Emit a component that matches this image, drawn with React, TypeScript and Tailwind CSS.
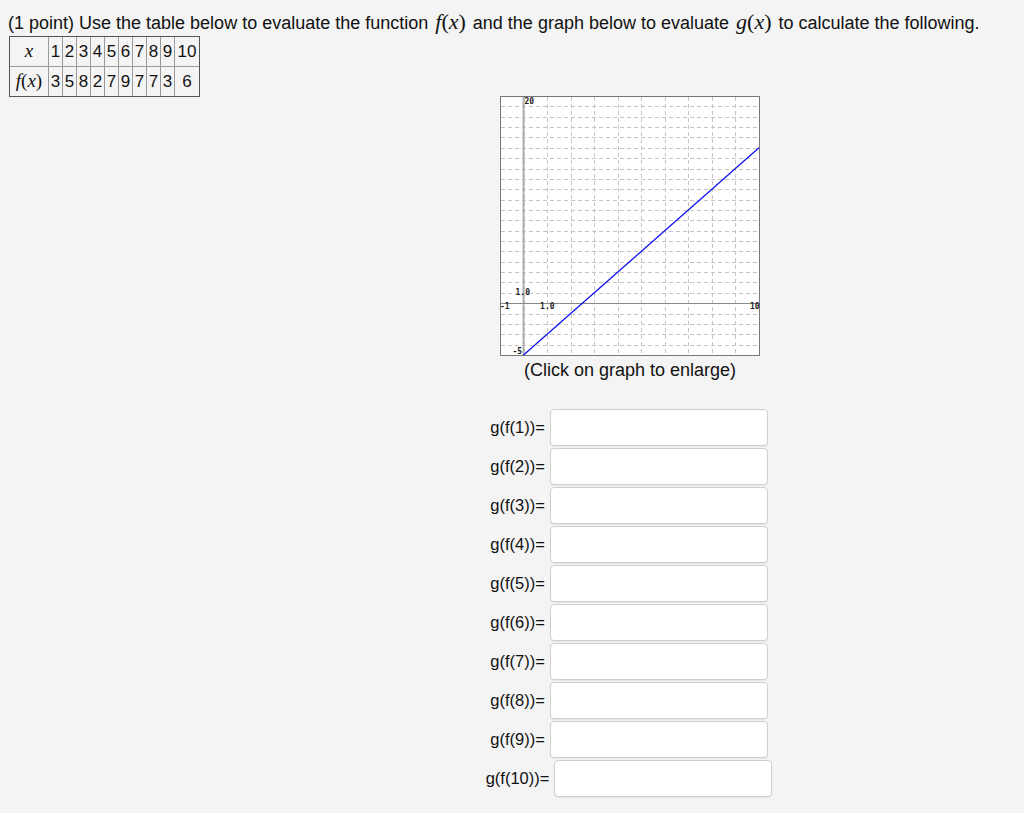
const XS = [1, 2, 3, 4, 5, 6, 7, 8, 9, 10];
const FX = [3, 5, 8, 2, 7, 9, 7, 7, 3, 6];

const W = 259;
const H = 259;
const px = (x: number) => ((x + 1) * W) / 11;
const py = (y: number) => ((20 - y) * H) / 25;

function MathFx({ name, big }: { name: string; big?: boolean }) {
  return (
    <span className={`font-['Liberation_Serif',serif] ${big ? "mx-[2px] text-[22px] leading-[20px]" : "text-[19px]"}`}>
      <i>{name}</i>(<i>x</i>)
    </span>
  );
}

function Graph() {
  const vx = Array.from({ length: 10 }, (_, i) => i);
  const hy = Array.from({ length: 24 }, (_, i) => i - 4);
  return (
    <svg width={260} height={260} viewBox="0 0 260 260" className="block">
      <rect x={0.5} y={0.5} width={W} height={H} fill="#fff" stroke="#777" />
      {vx.map((x) => (
        <line key={"v" + x} x1={Math.round(px(x)) + 0.5} x2={Math.round(px(x)) + 0.5} y1={1} y2={H} stroke="#c4c4c4" strokeDasharray="4 3" />
      ))}
      {hy.map((y) => (
        <line key={"h" + y} x1={1} x2={W} y1={Math.round(py(y)) + 0.5} y2={Math.round(py(y)) + 0.5} stroke="#c4c4c4" strokeDasharray="4 3" />
      ))}
      {/* axes */}
      <line x1={px(0)} x2={px(0)} y1={1} y2={H} stroke="#b0b0b0" strokeWidth={2} />
      <line x1={1} x2={W} y1={Math.round(py(0)) + 0.5} y2={Math.round(py(0)) + 0.5} stroke="#888" />
      <line x1={px(0)} y1={py(-5)} x2={px(10)} y2={py(15)} stroke="#1010f0" strokeWidth={1.3} />
      <g fontFamily="'DejaVu Sans Mono', monospace" fontSize={8} fontWeight="bold" fill="#222">
        <text x={px(0) + 1} y={8}>20</text>
        <text x={px(0) - 8} y={py(1) + 2}>1.0</text>
        <text x={px(1) - 7} y={py(0) + 6}>1.0</text>
        <text x={0} y={py(0) + 6}>-1</text>
        <text x={W - 9} y={py(0) + 6}>10</text>
        <text x={px(0) - 11} y={H - 1}>-5</text>
      </g>
    </svg>
  );
}

export default function App() {
  return (
    <div className="min-h-[813px] bg-[#f4f4f4] font-['Liberation_Sans',Arial,sans-serif] text-[16px] text-[#111]">
      <p className="pl-2 pt-[12px] text-[18px] leading-[22px]">
        (1 point) Use the table below to evaluate the function <MathFx name="f" big /> and the graph below to evaluate{" "}
        <MathFx name="g" big /> to calculate the following.
      </p>

      <div className="ml-[9px] mt-[2px] inline-grid grid-cols-[39px_repeat(9,14px)_24px] border border-[#555] bg-[#f4f4f4]">
        <div className="flex h-[30px] items-center justify-center border-b border-r border-[#999]">
          <i className="font-['Liberation_Serif',serif] text-[19px]">x</i>
        </div>
        {XS.map((x, i) => (
          <div
            key={"x" + x}
            className={`flex h-[30px] items-center justify-center border-b border-[#999] text-[17px] ${i < 9 ? "border-r" : ""}`}
          >
            {x}
          </div>
        ))}
        <div className="flex h-[29px] items-center justify-center border-r border-[#999]">
          <MathFx name="f" />
        </div>
        {FX.map((v, i) => (
          <div key={"f" + i} className={`flex h-[29px] items-center justify-center border-[#999] text-[17px] ${i < 9 ? "border-r" : ""}`}>
            {v}
          </div>
        ))}
      </div>

      <div className="flex flex-col items-center pl-[236px]">
        <div className="-mt-[1px]">
          <Graph />
        </div>
        <div className="mt-[3px] text-[18px] leading-[22px]">(Click on graph to enlarge)</div>
      </div>

      <div className="mt-[28px] flex flex-col items-center gap-[2px] pl-[234px]">
        {XS.map((n) => (
          <div key={n} className="flex items-center gap-[5px]">
            <span className="text-[16.5px]">g(f({n}))=</span>
            <input
              type="text"
              className="h-[37px] w-[218px] rounded-[4px] border border-[#cfcfcf] bg-white shadow-[0_1px_1px_rgba(0,0,0,0.06)] outline-none"
            />
          </div>
        ))}
      </div>
    </div>
  );
}
